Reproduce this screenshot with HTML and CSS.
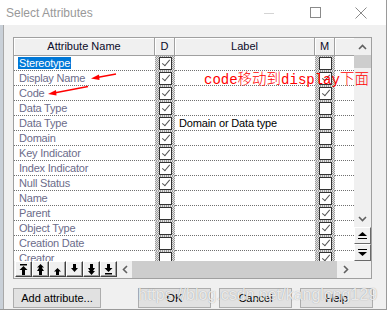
FILE: index.html
```html
<!DOCTYPE html>
<html>
<head>
    <title>Select Attributes</title>
    <link rel="stylesheet" href="styles.css">
</head>
<body>
<div class="screen">
    <div class="dialog">
        <!-- caption bar -->
        <div class="titlebar">
            <span class="title">Select Attributes</span>
            <div class="caps">
                <span class="cap"><svg width="10" height="10"><line x1="0" y1="5.5" x2="10" y2="5.5" stroke="#d4d4d4"/></svg></span>
                <span class="cap"><svg width="11" height="11"><rect x="0.5" y="0.5" width="10" height="10" fill="none" stroke="#8a8a8a"/></svg></span>
                <span class="cap"><svg width="12" height="12"><path d="M0.5 0.5 L11.5 11.5 M11.5 0.5 L0.5 11.5" stroke="#8a8a8a"/></svg></span>
            </div>
        </div>

        <div class="body">
            <div class="gridctl">
                <div class="gridmain">
                    <div class="table">
                        <div class="hdr">
                            <div class="h">Attribute Name</div>
                            <div class="h">D</div>
                            <div class="h">Label</div>
                            <div class="h">M</div>
                            <div class="h last"></div>
                        </div>
                        <div class="rows">
                            <div class="row"><div class="c name"><span class="sel">Stereotype</span></div><div class="chk"><span class="cb on"></span></div><div class="c lbl"></div><div class="chk"><span class="cb"></span></div><div class="c"></div></div>
                            <div class="row"><div class="c name">Display Name</div><div class="chk"><span class="cb on"></span></div><div class="c lbl"></div><div class="chk"><span class="cb on"></span></div><div class="c"></div></div>
                            <div class="row"><div class="c name">Code</div><div class="chk"><span class="cb on"></span></div><div class="c lbl"></div><div class="chk"><span class="cb on"></span></div><div class="c"></div></div>
                            <div class="row"><div class="c name">Data Type</div><div class="chk"><span class="cb on"></span></div><div class="c lbl"></div><div class="chk"><span class="cb"></span></div><div class="c"></div></div>
                            <div class="row"><div class="c name">Data Type</div><div class="chk"><span class="cb on"></span></div><div class="c lbl">Domain or Data type</div><div class="chk"><span class="cb"></span></div><div class="c"></div></div>
                            <div class="row"><div class="c name">Domain</div><div class="chk"><span class="cb on"></span></div><div class="c lbl"></div><div class="chk"><span class="cb"></span></div><div class="c"></div></div>
                            <div class="row"><div class="c name">Key Indicator</div><div class="chk"><span class="cb on"></span></div><div class="c lbl"></div><div class="chk"><span class="cb"></span></div><div class="c"></div></div>
                            <div class="row"><div class="c name">Index Indicator</div><div class="chk"><span class="cb on"></span></div><div class="c lbl"></div><div class="chk"><span class="cb"></span></div><div class="c"></div></div>
                            <div class="row"><div class="c name">Null Status</div><div class="chk"><span class="cb on"></span></div><div class="c lbl"></div><div class="chk"><span class="cb"></span></div><div class="c"></div></div>
                            <div class="row"><div class="c name">Name</div><div class="chk"><span class="cb"></span></div><div class="c lbl"></div><div class="chk"><span class="cb on"></span></div><div class="c"></div></div>
                            <div class="row"><div class="c name">Parent</div><div class="chk"><span class="cb"></span></div><div class="c lbl"></div><div class="chk"><span class="cb on"></span></div><div class="c"></div></div>
                            <div class="row"><div class="c name">Object Type</div><div class="chk"><span class="cb"></span></div><div class="c lbl"></div><div class="chk"><span class="cb on"></span></div><div class="c"></div></div>
                            <div class="row"><div class="c name">Creation Date</div><div class="chk"><span class="cb"></span></div><div class="c lbl"></div><div class="chk"><span class="cb on"></span></div><div class="c"></div></div>
                            <div class="row"><div class="c name">Creator</div><div class="chk"><span class="cb"></span></div><div class="c lbl"></div><div class="chk"><span class="cb on"></span></div><div class="c"></div></div>
                        </div>
                    </div>

                    <!-- vertical scroll bar with the two extra buttons -->
                    <div class="vscroll">
                        <div class="arrow"><svg width="9" height="6"><polyline points="1,5 4.5,1.5 8,5" fill="none" stroke="#606060" stroke-width="1.6"/></svg></div>
                        <div class="vtrack"><div class="vthumb"></div></div>
                        <div class="arrow"><svg width="9" height="6"><polyline points="1,1 4.5,4.5 8,1" fill="none" stroke="#606060" stroke-width="1.6"/></svg></div>
                        <div class="sbtn"><svg width="9" height="8"><polygon points="4.5,0 9,4 0,4" fill="#000"/><rect x="0" y="6" width="9" height="1" fill="#000"/></svg></div>
                        <div class="sbtn"><svg width="9" height="8"><rect x="0" y="0" width="9" height="1" fill="#000"/><polygon points="0,3 9,3 4.5,7" fill="#000"/></svg></div>
                    </div>
                </div>

                <div class="gridfoot">
                    <div class="tools">
                        <span class="tb"><svg width="9" height="11"><rect x="1" y="0" width="7" height="1.5"/><polygon points="4.5,2 8.5,6 6,6 6,11 3,11 3,6 0.5,6"/></svg></span>
                        <span class="tb"><svg width="9" height="11"><polygon points="4.5,0 8,3.5 6,3.5 6,4 8,7 6,7 6,11 3,11 3,7 1,7 3,4 3,3.5 1,3.5"/></svg></span>
                        <span class="tb"><svg width="9" height="11"><polygon points="4.5,4 8,7.5 6,7.5 6,11 3,11 3,7.5 1,7.5"/></svg></span>
                        <span class="tb"><svg width="9" height="11"><polygon points="3,0 6,0 6,4 8,4 4.5,8 1,4 3,4"/></svg></span>
                        <span class="tb"><svg width="9" height="11"><polygon points="3,0 6,0 6,4 8,4 6,7 8,7 4.5,11 1,7 3,7 1,4 3,4"/></svg></span>
                        <span class="tb"><svg width="9" height="11"><polygon points="3,0 6,0 6,4 8.5,4 4.5,8 0.5,4 3,4"/><rect x="1" y="9" width="7" height="1.5"/></svg></span>
                    </div>
                    <div class="hscroll">
                        <div class="harrow left"><svg width="6" height="9"><polyline points="5,1 1.5,4.5 5,8" fill="none" stroke="#606060" stroke-width="1.6"/></svg></div>
                        <div class="hthumb"></div>
                        <div class="harrow right"><svg width="6" height="9"><polyline points="1,1 4.5,4.5 1,8" fill="none" stroke="#606060" stroke-width="1.6"/></svg></div>
                    </div>
                    <div class="corner"></div>
                </div>
            </div>

            <div class="buttons">
                <button class="btn wide">Add attribute...</button>
                <div class="btngroup">
                    <button class="btn">OK</button>
                    <button class="btn">Cancel</button>
                    <button class="btn">Help</button>
                </div>
            </div>
        </div>
    </div>

    <!-- red annotation drawn over the dialog -->
    <svg class="marks" width="388" height="313">
        <line x1="116" y1="74" x2="97" y2="77.5" stroke="#f00" stroke-width="1.3"/>
        <polygon points="91,78.5 99,74.5 99.5,80" fill="#f00"/>
        <line x1="88" y1="86.5" x2="54" y2="93" stroke="#f00" stroke-width="1.3"/>
        <polygon points="48,94 56,90 56.5,95.5" fill="#f00"/>
    </svg>
    <div class="note">code<span class="cjk">移动到</span>display<span class="cjk">下面</span></div>
    <div class="watermark">https://blog.csdn.net/kanglong129</div>
</div>
</body>
</html>
```

FILE: styles.css
```css
body
{
    margin: 0;
    font-family: "Liberation Sans", Arial, sans-serif;
    font-size: 11px;
    background: #ffffff;
}
.screen
{
    position: relative;
    width: 388px;
    height: 313px;
    overflow: hidden;
    background: #ffffff;
}
.dialog
{
    width: 386px;
    height: 309px;
    border-right: 1px solid #9a9a9a;
    border-bottom: 1px solid #9a9a9a;
    display: flex;
    flex-direction: column;
    background: #f0f0f0;
}
.titlebar
{
    height: 25px;
    flex: none;
    background: #ffffff;
    display: flex;
    align-items: center;
    padding: 0 2px 0 6px;
}
.title
{
    flex: 1;
    font-size: 12px;
    color: #999999;
}
.caps
{
    display: flex;
}
.cap
{
    width: 46px;
    height: 25px;
    display: flex;
    align-items: center;
    justify-content: center;
}
.body
{
    flex: 1;
    padding: 12px 0 0 13px;
    background: linear-gradient(90deg, #c9d0d8 0 3px, #a8a8a8 3px 4px, #f0f0f0 4px);
}

/* the grid control */
.gridctl
{
    width: 357px;
    border: 1px solid #a0a0a0;
    background: #f0f0f0;
}
.gridmain
{
    display: flex;
    height: 223px;
}
.table
{
    width: 340px;
    display: flex;
    flex-direction: column;
}
.hdr, .row
{
    display: grid;
    grid-template-columns: 141px 20px 140px 20px 19px;
}
.h
{
    height: 18px;
    box-sizing: border-box;
    border-right: 1px solid #a0a0a0;
    border-bottom: 1px solid #a0a0a0;
    box-shadow: inset 1px 1px #ffffff;
    text-align: center;
    line-height: 17px;
    color: #0a0a28;
}
.h.last
{
    border-right: none;
}
.rows
{
    height: 205px;
    overflow: hidden;
    background: #ffffff;
}
.row
{
    height: 15px;
}
.c
{
    height: 15px;
    box-sizing: border-box;
    border-bottom: 1px dotted #707070;
    line-height: 14px;
    white-space: nowrap;
    overflow: hidden;
}
.name
{
    padding-left: 5px;
    color: #6c6c8a;
    letter-spacing: -0.2px;
}
.lbl
{
    padding-left: 4px;
    color: #000000;
    letter-spacing: -0.15px;
}
.sel
{
    background: #0078d7;
    color: #ffffff;
    padding: 0 1px;
    margin-left: -1px;
}
.chk
{
    height: 15px;
    display: flex;
    align-items: center;
    justify-content: center;
    background: repeating-conic-gradient(#9a9a9a 0 25%, #e4e4e4 0 50%) 0 0 / 2px 2px;
}
.cb
{
    position: relative;
    width: 13px;
    height: 13px;
    box-sizing: border-box;
    border: 1px solid #333333;
    background: #ffffff;
}
.cb.on::after
{
    content: "";
    position: absolute;
    left: 4px;
    top: 0px;
    width: 3px;
    height: 7px;
    border-right: 1.3px solid #555555;
    border-bottom: 1.3px solid #555555;
    transform: rotate(40deg);
}

/* scroll bars */
.vscroll
{
    width: 17px;
    display: flex;
    flex-direction: column;
}
.arrow
{
    height: 17px;
    display: flex;
    align-items: center;
    justify-content: center;
}
.vtrack
{
    flex: 1;
}
.vthumb
{
    height: 13px;
    background: #cdcdcd;
}
.sbtn
{
    height: 17px;
    box-sizing: border-box;
    border: 1px solid;
    border-color: #ffffff #696969 #696969 #ffffff;
    display: flex;
    align-items: center;
    justify-content: center;
}
.gridfoot
{
    display: flex;
    height: 17px;
}
.tools
{
    display: flex;
    padding-left: 1px;
}
.tb
{
    width: 17px;
    height: 16px;
    box-sizing: border-box;
    border: 1px solid;
    border-color: #ffffff #404040 #404040 #ffffff;
    box-shadow: inset -1px -1px #a0a0a0;
    display: flex;
    align-items: center;
    justify-content: center;
}
.hscroll
{
    width: 237px;
    display: flex;
}
.harrow
{
    display: flex;
    align-items: center;
    justify-content: center;
}
.harrow.left
{
    width: 15px;
}
.harrow.right
{
    width: 17px;
}
.hthumb
{
    width: 205px;
    background: #cdcdcd;
}
.corner
{
    width: 17px;
}

/* dialog buttons */
.buttons
{
    width: 360px;
    display: flex;
    justify-content: space-between;
    margin-top: 9px;
}
.btngroup
{
    display: flex;
    gap: 8px;
}
.btn
{
    width: 73px;
    height: 20px;
    padding: 0;
    border: 1px solid #adadad;
    background: #e1e1e1;
    font-family: "Liberation Sans", Arial, sans-serif;
    font-size: 11px;
    color: #000000;
}
.btn.wide
{
    width: 88px;
}

/* overlays: annotation and watermark */
.marks
{
    position: absolute;
    left: 0;
    top: 0;
}
.note
{
    position: absolute;
    left: 204px;
    top: 70px;
    font-family: "Liberation Mono", "Noto Sans CJK SC", monospace;
    font-size: 14px;
    line-height: 16px;
    color: #ff0000;
    white-space: nowrap;
}
.note .cjk
{
    font-family: "Noto Sans CJK SC", sans-serif;
    font-size: 14.5px;
    font-weight: 300;
}
.watermark
{
    position: absolute;
    left: 138px;
    top: 286px;
    font-size: 16px;
    color: rgba(255, 255, 255, 0.8);
    text-shadow: 0 0 1px rgba(0, 0, 0, 0.35);
    white-space: nowrap;
}
```
